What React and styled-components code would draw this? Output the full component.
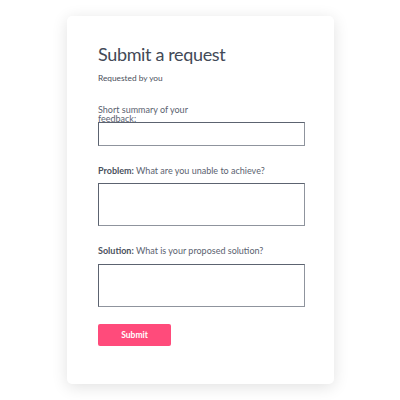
import React from 'react';
import styled, { createGlobalStyle } from 'styled-components';

const GlobalStyle = createGlobalStyle`
  html, body {
    margin: 0;
    padding: 0;
    background: #ffffff;
  }
  body {
    font-family: 'Lato', 'Open Sans', sans-serif;
    color: #444b58;
  }
`

const Page = styled.div`
  width: 400px;
  height: 400px;
  box-sizing: border-box;
  padding: 16px 0 0 67px;
`

const Card = styled.div`
  width: 267px;
  height: 368px;
  box-sizing: border-box;
  padding: 27px 29px 0 31px;
  background: #ffffff;
  border-radius: 5px;
  box-shadow: 0 3px 16px rgba(0, 0, 0, .12);
`

const Title = styled.h1`
  margin: 0;
  font-size: 18px;
  line-height: 22px;
  font-weight: 400;
  letter-spacing: -0.35px;
  color: #434a57;
`

const Subtitle = styled.div`
  margin-top: 8px;
  font-size: 8.3px;
  line-height: 10px;
  color: #4a505c;
`

const Field = styled.div`
  display: flex;
  flex-direction: column;
  margin-top: ${props => props.gap}px;
`

const Label = styled.label`
  font-size: 9px;
  line-height: 9.3px;
  color: #5b6270;
  width: ${props => props.narrow ? '110px' : 'auto'};
  margin-bottom: ${props => props.narrow ? '-1.5px' : '8px'};

  & > b {
    font-weight: 700;
    color: #4b515d;
  }
`

const Box = styled.div`
  box-sizing: border-box;
  width: 207px;
  height: ${props => props.tall ? '43px' : '24px'};
  border: 1.5px solid #5c6370;
  border-right-color: #8f949d;
  border-bottom-color: #8f949d;
  background: #ffffff;
`

const Button = styled.button`
  margin-top: 17px;
  width: 73px;
  height: 22px;
  border: none;
  border-radius: 2px;
  background: #ff4b7b;
  color: #ffffff;
  font-family: 'Lato', 'Open Sans', sans-serif;
  font-weight: 700;
  font-size: 8.5px;
  padding: 0;
  cursor: pointer;
`

export default function App() {
  return (
    <Page>
      <GlobalStyle />
      <Card>
        <Title>Submit a request</Title>
        <Subtitle>Requested by you</Subtitle>
        <Field gap={22}>
          <Label narrow>Short summary of your feedback:</Label>
          <Box />
        </Field>
        <Field gap={20}>
          <Label><b>Problem:</b> What are you unable to achieve?</Label>
          <Box tall />
        </Field>
        <Field gap={20}>
          <Label><b>Solution:</b> What is your proposed solution?</Label>
          <Box tall />
        </Field>
        <Button>Submit</Button>
      </Card>
    </Page>
  );
}
